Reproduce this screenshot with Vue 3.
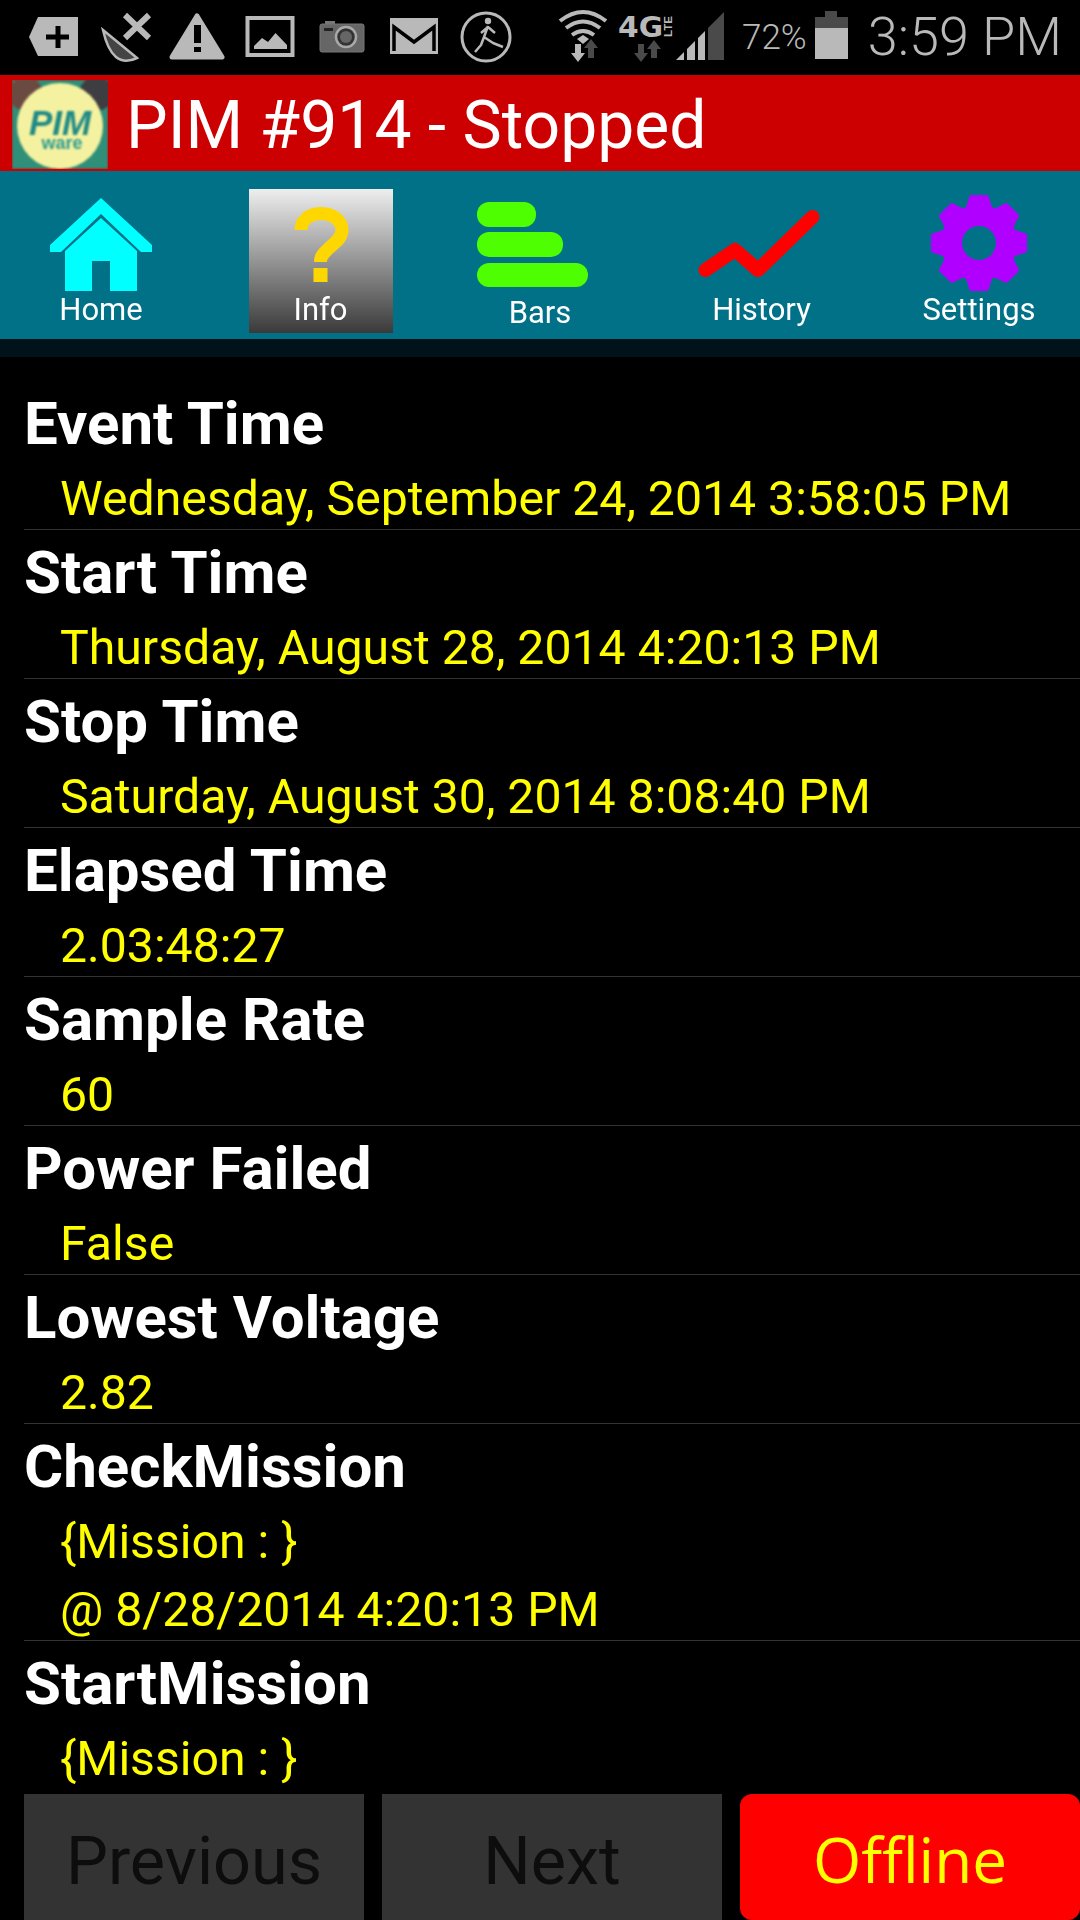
<script setup>
const rows = [
  { label: 'Event Time', values: ['Wednesday, September 24, 2014 3:58:05 PM'] },
  { label: 'Start Time', values: ['Thursday, August 28, 2014 4:20:13 PM'] },
  { label: 'Stop Time', values: ['Saturday, August 30, 2014 8:08:40 PM'] },
  { label: 'Elapsed Time', values: ['2.03:48:27'] },
  { label: 'Sample Rate', values: ['60'] },
  { label: 'Power Failed', values: ['False'] },
  { label: 'Lowest Voltage', values: ['2.82'] },
  { label: 'CheckMission', values: ['{Mission : }', '@ 8/28/2014 4:20:13 PM'] },
  { label: 'StartMission', values: ['{Mission : }'] }
]

const gearTeeth = [0, 45, 90, 135, 180, 225, 270, 315]
</script>

<template>
  <div class="screen">
    <div class="status">
      <svg class="status_icons" viewBox="0 0 520 75" width="520" height="75">
        <!-- add tag -->
        <path d="M29 37 L38 17 H78 V56 H38 Z" fill="#b9b9b9" />
        <path d="M46 37 H69 M58 26 V48" stroke="#000" stroke-width="5" fill="none" />
        <!-- no satellite -->
        <path d="M125 15 L149 38 M149 15 L125 38" stroke="#b9b9b9" stroke-width="6" fill="none" />
        <path d="M103 30 L137 58 Q112 70 103 30 Z" fill="#444" stroke="#b9b9b9" stroke-width="2.5" />
        <!-- warning -->
        <path d="M197 16 L222 57 H172 Z" fill="#b9b9b9" stroke="#b9b9b9" stroke-width="5" stroke-linejoin="round" />
        <rect x="194" y="25" width="7" height="18" fill="#000" />
        <rect x="194" y="47" width="7" height="5" fill="#000" />
        <!-- picture -->
        <rect x="247.5" y="18" width="45" height="37" fill="none" stroke="#b9b9b9" stroke-width="4" />
        <path d="M254 49 V46 L262 38 L268 42 L275.5 33 L287 45 V49 Z" fill="#b9b9b9" />
        <!-- camera -->
        <rect x="325" y="21" width="10" height="5" fill="#777" />
        <rect x="320" y="24" width="44" height="28" rx="2" fill="#666" stroke="#777" stroke-width="1" />
        <circle cx="346" cy="37" r="10" fill="#333" stroke="#a8a8a8" stroke-width="2.5" />
        <circle cx="346" cy="37" r="6" fill="#666" />
        <rect x="324" y="28" width="9" height="3" fill="#222" />
        <!-- gmail -->
        <rect x="390" y="18" width="48" height="36" fill="#b9b9b9" />
        <path d="M394 51 V27 L414 42 L434 27 V51" fill="none" stroke="#000" stroke-width="3.5" />
        <!-- runner -->
        <circle cx="486" cy="37" r="24" fill="none" stroke="#b9b9b9" stroke-width="3" />
        <circle cx="488" cy="21" r="3.2" fill="#b9b9b9" />
        <path d="M488 26 L484 37 L481 45 L475 52 M484 37 L493 43 L503 47 M488 27 L481 33 M488 27 L495 33" fill="none" stroke="#b9b9b9" stroke-width="2.5" stroke-linejoin="round" />
      </svg>
      <svg class="status_net" viewBox="550 0 180 75" width="180" height="75">
        <!-- wifi -->
        <path d="M560 21 Q583 3 606 21 M566 28 Q583 15 600 28 M572 35 Q583 27 594 35" fill="none" stroke="#b9b9b9" stroke-width="4" />
        <path d="M577 39 L583 35 L589 39 L583 44 Z" fill="#b9b9b9" />
        <path d="M591 39 L598 48 H594 V58 H588 V48 H584 Z" fill="#4a4a4a" />
        <path d="M578 62 L571 53 H575 V44 H581 V53 H585 Z" fill="#b9b9b9" />
        <!-- 4G LTE -->
        <text class="net_4g" x="618" y="37" textLength="45" lengthAdjust="spacingAndGlyphs">4G</text>
        <text class="net_lte" transform="translate(672 37) rotate(-90)" textLength="21" lengthAdjust="spacingAndGlyphs">LTE</text>
        <path d="M641 62 L634 53 H638 V44 H644 V53 H648 Z" fill="#4a4a4a" />
        <path d="M654 40 L661 49 H657 V58 H651 V49 H647 Z" fill="#4a4a4a" />
        <!-- signal -->
        <path d="M676 60 L684 52 V60 Z M687 49 L695 41 V60 H687 Z M698 38 L705 31 V60 H698 Z" fill="#b9b9b9" />
        <path d="M708 28 L724 12 V60 H708 Z" fill="#4a4a4a" />
      </svg>
      <span class="percent">72%</span>
      <div class="battery">
        <div class="battery_nub"></div>
        <div class="battery_empty"></div>
        <div class="battery_full"></div>
      </div>
      <span class="clock">3:59 PM</span>
    </div>

    <div class="title_bar">
      <svg class="logo" viewBox="0 0 96 89" width="96" height="89">
        <g class="logo_art">
          <rect width="96" height="89" fill="#2f8f78" />
          <circle cx="14" cy="14" r="17" fill="#6b4a42" />
          <circle cx="84" cy="14" r="17" fill="#3d3d42" />
          <circle cx="48" cy="46" r="43" fill="#f4f2a0" />
          <text class="logo_pim" x="48" y="55">PIM</text>
          <text class="logo_ware" x="50" y="69">ware</text>
        </g>
      </svg>
      <h1>PIM #914 - Stopped</h1>
    </div>

    <div class="nav">
      <div class="nav_item">
        <svg viewBox="0 0 144 108" width="144" height="108">
          <path d="M72 9 L123 56 V63 H112 L72 25 L32 63 H21 V56 Z" fill="#00ffff" />
          <path d="M72 29 L108 62 V102 H81 V72 H63 V102 H36 V62 Z" fill="#00ffff" />
        </svg>
        <span>Home</span>
      </div>
      <div class="nav_item active">
        <svg viewBox="0 0 144 108" width="144" height="108">
          <path d="M52 41 C52 31 61 24.5 72 24.5 C84 24.5 93 32 93 41 C93 50 85 54 79 60 C74 65 71.5 67 71.5 73" fill="none" stroke="#ffd700" stroke-width="13" />
          <rect x="64.5" y="79" width="14" height="14" fill="#ffd700" />
        </svg>
        <span>Info</span>
      </div>
      <div class="nav_item bars">
        <svg viewBox="0 0 144 108" width="144" height="108">
          <rect x="9" y="13" width="59" height="25" rx="12" fill="#4dff00" />
          <rect x="9" y="43" width="86" height="25" rx="12" fill="#4dff00" />
          <rect x="9" y="74" width="111" height="24" rx="12" fill="#4dff00" />
        </svg>
        <span>Bars</span>
      </div>
      <div class="nav_item history">
        <svg viewBox="0 0 144 108" width="144" height="108">
          <polyline points="17.5,81 47,61 70,81 124.5,28" fill="none" stroke="#ff0000" stroke-width="14" stroke-linejoin="round" stroke-linecap="round" />
        </svg>
        <span>History</span>
      </div>
      <div class="nav_item">
        <svg viewBox="0 0 144 108" width="144" height="108">
          <g transform="translate(72 54)">
            <path v-for="deg in gearTeeth" :key="deg" d="M-14 -33 L-9 -48 H9 L14 -33 Z" fill="#b000ff" :transform="`rotate(${deg})`" />
            <circle r="38" fill="#b000ff" />
            <circle r="17" fill="#007186" />
          </g>
        </svg>
        <span>Settings</span>
      </div>
    </div>
    <div class="nav_shadow"></div>

    <div class="list">
      <div class="row" v-for="row in rows" :key="row.label">
        <div class="row_label">{{ row.label }}</div>
        <div class="row_value" v-for="value in row.values" :key="value">{{ value }}</div>
      </div>
    </div>

    <div class="footer">
      <div class="btn disabled">Previous</div>
      <div class="btn disabled">Next</div>
      <div class="btn offline">Offline</div>
    </div>
  </div>
</template>

<style scoped>
.screen {
  width: 1080px;
  height: 1920px;
  display: flex;
  flex-direction: column;
  overflow: hidden;
  background: #000;
  font-family: Roboto, "Liberation Sans", sans-serif;
}

.status {
  height: 75px;
  flex: none;
  display: flex;
  align-items: flex-start;
  background: #000;
  color: #b9b9b9;
}

.status svg {
  flex: none;
  display: block;
}

.status_net {
  margin-left: 30px;
}

.net_4g {
  font-family: "DejaVu Sans", sans-serif;
  font-weight: 700;
  font-size: 29px;
  fill: #b9b9b9;
}

.net_lte {
  font-family: "Liberation Sans", sans-serif;
  font-weight: 700;
  font-size: 11px;
  fill: #b9b9b9;
}

.percent {
  margin-left: 12px;
  margin-top: 18px;
  font-size: 35px;
  line-height: 40px;
  font-weight: 300;
}

.battery {
  margin-left: 8px;
  margin-top: 11px;
  width: 33px;
  height: 48px;
  display: flex;
  flex-direction: column;
  align-items: center;
}

.battery_nub {
  width: 12px;
  height: 6px;
  background: #4a4a4a;
}

.battery_empty {
  width: 100%;
  height: 11px;
  background: #4a4a4a;
}

.battery_full {
  width: 100%;
  flex: 1;
  background: #b9b9b9;
}

.clock {
  margin-left: 20px;
  margin-top: 5px;
  font-size: 54px;
  line-height: 64px;
  font-weight: 300;
  white-space: nowrap;
}

.title_bar {
  height: 96px;
  flex: none;
  display: flex;
  align-items: flex-start;
  background: #cc0000;
}

.logo {
  flex: none;
  margin: 5px 0 0 12px;
}

.logo_art {
  filter: blur(0.8px);
}

.logo_pim {
  font-family: "Liberation Sans", sans-serif;
  font-weight: 700;
  font-style: italic;
  font-size: 35px;
  text-anchor: middle;
  fill: #1f8a85;
}

.logo_ware {
  font-family: "Liberation Sans", sans-serif;
  font-weight: 700;
  font-size: 18px;
  text-anchor: middle;
  fill: #2f9a8e;
}

.title_bar h1 {
  margin: 0 0 0 18px;
  padding-top: 6px;
  font-size: 66px;
  line-height: 90px;
  font-weight: 400;
  color: #fff;
  white-space: nowrap;
}

.nav {
  height: 168px;
  flex: none;
  box-sizing: border-box;
  padding: 18px 29px 0;
  display: flex;
  justify-content: space-between;
  align-items: flex-start;
  background: #007186;
}

.nav_item {
  width: 144px;
  height: 144px;
  display: flex;
  flex-direction: column;
  align-items: center;
}

.nav_item svg {
  display: block;
}

.nav_item span {
  font-size: 31px;
  line-height: 26px;
  color: #fff;
  filter: blur(0.6px);
}

.nav_item.bars span {
  margin-top: 3px;
}

.nav_item.history span {
  margin-left: 4px;
}

.nav_item.active {
  background: linear-gradient(#eeeeee, #3a3a3a);
}

.nav_shadow {
  height: 18px;
  flex: none;
  background: #00131a;
}

.list {
  flex: 1;
  min-height: 0;
  overflow: hidden;
  padding: 24px 0 0 24px;
}

.row {
  border-bottom: 1px solid #333;
}

.row:last-child {
  border-bottom: none;
}

.row_label {
  padding-top: 6px;
  font-size: 60px;
  line-height: 74px;
  font-weight: 700;
  color: #fff;
}

.row_value {
  padding: 8px 0 0 36px;
  font-size: 48.2px;
  line-height: 60px;
  color: #ffff00;
}

.footer {
  height: 126px;
  flex: none;
  display: flex;
  gap: 18px;
  padding-left: 24px;
}

.btn {
  width: 340px;
  display: flex;
  align-items: center;
  justify-content: center;
  font-size: 66.5px;
  padding-top: 8px;
  box-sizing: border-box;
}

.disabled {
  background: #333;
  color: #0d0d0d;
}

.offline {
  width: 340px;
  padding-top: 4px;
  background: #ff0000;
  border-radius: 12px;
  color: #ffff00;
  font-family: "Open Sans", sans-serif;
  font-size: 62px;
}
</style>
